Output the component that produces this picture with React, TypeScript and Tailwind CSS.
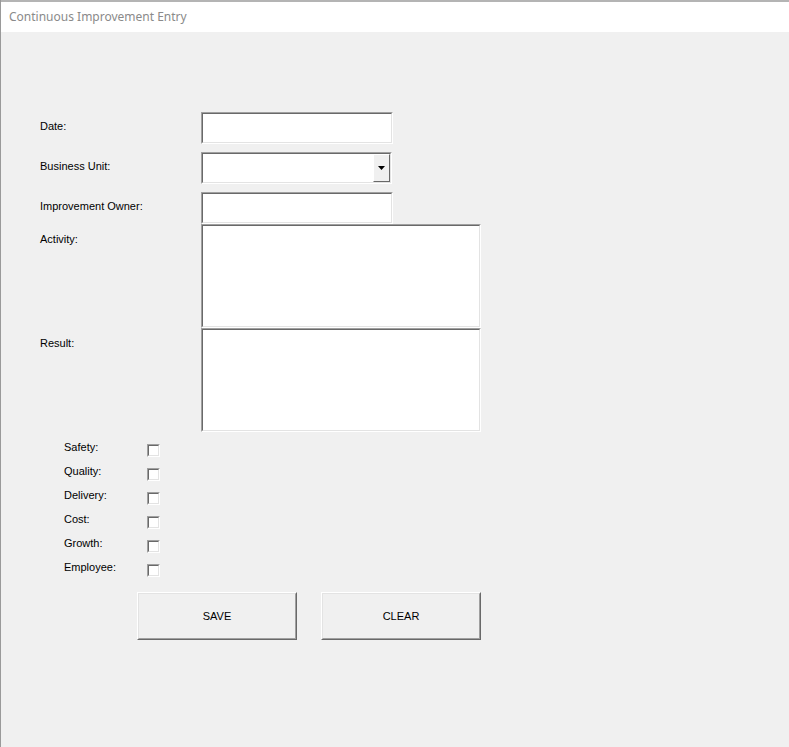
import React from "react";

const Sunken = ({ w, h, children }: { w: string; h: string; children?: React.ReactNode }) => (
  <div className={`${w} ${h} border-t border-l border-t-[#a0a0a0] border-l-[#a0a0a0] border-b border-r border-b-white border-r-white`}>
    <div className="w-full h-full border-t border-l border-t-[#696969] border-l-[#696969] border-b border-r border-b-[#e3e3e3] border-r-[#e3e3e3] bg-white relative">
      {children}
    </div>
  </div>
);

const Raised = ({ label }: { label: string }) => (
  <div className="w-[160px] h-[48px] border-t border-l border-t-white border-l-white border-b border-r border-b-[#696969] border-r-[#696969]">
    <div className="w-full h-full border-t border-l border-t-[#e3e3e3] border-l-[#e3e3e3] border-b border-r border-b-[#a0a0a0] border-r-[#a0a0a0] bg-[#f0f0f0] flex items-center justify-center text-[11px] text-black">
      {label}
    </div>
  </div>
);

const Label = ({ text }: { text: string }) => (
  <div className="w-[161px] shrink-0 pt-[8px] leading-[13px] text-[11px] text-black">{text}</div>
);

export default function App() {
  const checks = ["Safety:", "Quality:", "Delivery:", "Cost:", "Growth:", "Employee:"];
  return (
    <div
      className="w-[789px] h-[747px] bg-[#f0f0f0] border-l border-l-[#9a9a9a] overflow-hidden flex flex-col"
      style={{ fontFamily: '"Liberation Sans", Arial, sans-serif' }}
    >
      <div className="h-[2px] bg-[#b4b4b4] shrink-0" />
      <div className="h-[30px] bg-white shrink-0 flex items-center pl-[8px] pb-[1px] text-[12px] text-[#8a8a8a]" style={{ fontFamily: '"Noto Sans", "Open Sans", sans-serif' }}>
        Continuous Improvement Entry
      </div>
      <div className="flex flex-col pl-[39px] pt-[80px]">
        <div className="flex">
          <Label text="Date:" />
          <Sunken w="w-[192px]" h="h-[32px]" />
        </div>
        <div className="flex mt-[8px]">
          <Label text="Business Unit:" />
          <Sunken w="w-[191px]" h="h-[32px]">
            <div className="absolute right-0 top-0 bottom-0 w-[17px] border-t border-l border-t-white border-l-white border-b border-r border-b-[#696969] border-r-[#696969] bg-[#f0f0f0] flex items-center justify-center">
              <svg width="7" height="4" viewBox="0 0 7 4"><path d="M0 0h7L3.5 4z" fill="#000" /></svg>
            </div>
          </Sunken>
        </div>
        <div className="flex mt-[8px]">
          <Label text="Improvement Owner:" />
          <Sunken w="w-[192px]" h="h-[32px]" />
        </div>
        <div className="flex">
          <div className="w-[161px] shrink-0 pt-[9px] leading-[13px] text-[11px] text-black">Activity:</div>
          <Sunken w="w-[280px]" h="h-[104px]" />
        </div>
        <div className="flex">
          <div className="w-[161px] shrink-0 pt-[9px] leading-[13px] text-[11px] text-black">Result:</div>
          <Sunken w="w-[280px]" h="h-[104px]" />
        </div>
        <div className="flex flex-col pl-[24px] pt-[8px]">
          {checks.map((c) => (
            <div key={c} className="flex h-[24px]">
              <div className="w-[83px] leading-[13px] text-[11px] text-black pt-[1px]">{c}</div>
              <div className="mt-[4px]">
                <Sunken w="w-[13px]" h="h-[13px]" />
              </div>
            </div>
          ))}
        </div>
        <div className="flex gap-[24px] pl-[97px] mt-[8px]">
          <Raised label="SAVE" />
          <Raised label="CLEAR" />
        </div>
      </div>
    </div>
  );
}
